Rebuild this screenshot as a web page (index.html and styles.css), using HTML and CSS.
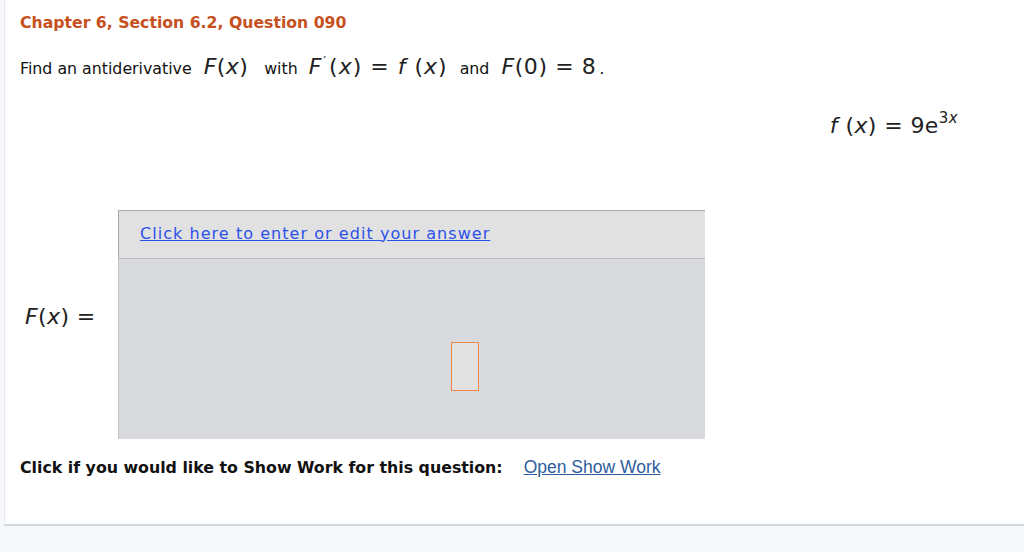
FILE: index.html
```html
<!DOCTYPE html>
<html>
<head>
<meta charset="utf-8">
<link rel="stylesheet" href="styles.css">
</head>
<body>
<div class="card">
  <div class="title">Chapter 6, Section 6.2, Question 090</div>
  <div class="question">
    <span class="txt">Find an antiderivative</span>
    <span class="math m1"><i>F</i>(<i>x</i>)</span>
    <span class="txt">with</span>
    <span class="math m2"><i>F</i><sup class="prime">&#8242;</sup>(<i>x</i>) = <i>f</i> (<i>x</i>)</span>
    <span class="txt">and</span>
    <span class="math m3"><i>F</i>(0) = 8</span>
    <span class="dot">.</span>
  </div>
  <div class="given"><span class="math"><i>f</i> (<i>x</i>) = 9e<sup class="exp">3<i>x</i></sup></span></div>
  <div class="answer-row">
    <div class="label math"><i>F</i>(<i>x</i>) =</div>
    <div class="box">
      <div class="box-head"><a class="edit" href="#">Click here to enter or edit your answer</a></div>
      <div class="box-body"><div class="caret"></div></div>
    </div>
  </div>
  <div class="showwork">
    <span class="sw-text">Click if you would like to Show Work for this question:</span>
    <a class="sw-link" href="#">Open Show Work</a>
  </div>
</div>
</body>
</html>
```
FILE: styles.css
```css
html, body {
  margin: 0;
  padding: 0;
  background: #f7f8fa;
}
.card {
  margin-left: 4px;
  height: 524px;
  background: #ffffff;
  border-left: 1px solid #e4e7ed;
  border-bottom: 2px solid #d2d8e0;
  padding-left: 15px;
  box-sizing: content-box;
  font-family: "DejaVu Sans", Verdana, sans-serif;
}
.title {
  padding-top: 13px;
  font-size: 15.7px;
  font-weight: bold;
  color: #c6501e;
  height: 20px;
  line-height: 20px;
}
.question {
  display: flex;
  align-items: baseline;
  margin-top: 21px;
  height: 28px;
}
.txt {
  font-size: 15.8px;
  color: #111;
}
.math {
  font-family: "DejaVu Sans", sans-serif;
  color: #222;
  font-size: 22px;
  letter-spacing: 0.4px;
}
.math i {
  font-style: italic;
}
.m1 { margin-left: 12px; margin-right: 16px; }
.m2 { margin-left: 11px; margin-right: 12px; letter-spacing: 1px; }
.m3 { margin-left: 12px; letter-spacing: 0.6px; }
.dot { font-size: 15px; margin-left: 3px; }
.prime {
  font-size: 12px;
  vertical-align: 9px;
  margin-left: 1px;
  margin-right: 2px;
}
.given {
  display: flex;
  justify-content: flex-end;
  padding-right: 66px;
  margin-top: 27px;
  height: 30px;
}
.given .math { font-size: 22px; }
.exp {
  font-size: 15px;
  vertical-align: 10px;
}
.answer-row {
  display: flex;
  align-items: center;
  margin-top: 71px;
}
.label {
  width: 98px;
  padding-left: 5px;
  box-sizing: border-box;
  font-size: 22px;
  position: relative;
  top: -8px;
}
.box {
  width: 587px;
  display: flex;
  flex-direction: column;
}
.box-head {
  background: #e1e1e1;
  border-top: 1px solid #a9a9a9;
  border-left: 1px solid #a9a9a9;
  border-bottom: 1px solid #bdbdbd;
  display: flex;
  align-items: center;
  padding-left: 21px;
  padding-bottom: 3px;
  box-sizing: border-box;
  height: 49px;
}
.edit {
  font-family: "DejaVu Sans", sans-serif;
  font-size: 16px;
  color: #2b50ea;
  text-decoration: underline;
  letter-spacing: 1.05px;
}
.box-body {
  height: 180px;
  background: #d9dadd;
  border-left: 1px solid #c4c4c6;
  position: relative;
}
.caret {
  position: absolute;
  left: 332px;
  top: 83px;
  width: 26px;
  height: 47px;
  background: #e1e1e1;
  border: 1px solid #f0874a;
}
.showwork {
  display: flex;
  align-items: baseline;
  margin-top: 18px;
}
.sw-text {
  font-size: 15.8px;
  font-weight: bold;
  color: #111;
}
.sw-link {
  margin-left: 21px;
  font-family: "Liberation Sans", Arial, sans-serif;
  font-size: 17.5px;
  color: #2e5e9c;
  text-decoration: underline;
}
```
